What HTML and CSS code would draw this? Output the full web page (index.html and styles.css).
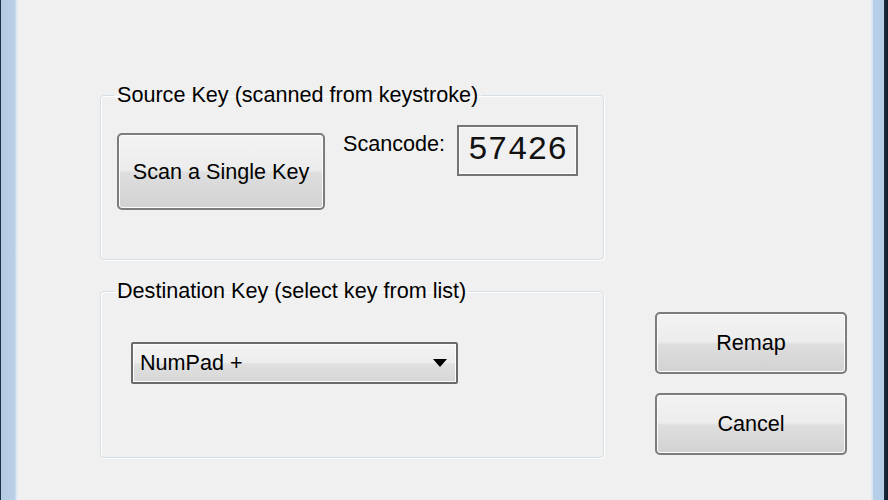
FILE: index.html
```html
<!DOCTYPE html>
<html lang="en">
<head>
    <meta charset="UTF-8">
    <meta name="viewport" content="width=device-width, initial-scale=1.0">
    <title>Remap Key</title>
    <link rel="stylesheet" href="styles.css">
</head>
<body>
    <div class="window">
        <div class="edge edge-left"></div>
        <div class="client">
            <div class="groups">
                <fieldset class="group group-source">
                    <legend>Source Key (scanned from keystroke)</legend>
                    <div class="group-body source-body">
                        <button class="btn btn-scan">Scan a Single Key</button>
                        <span class="scan-label">Scancode:</span>
                        <div class="scancode">57426</div>
                    </div>
                </fieldset>
                <fieldset class="group group-dest">
                    <legend>Destination Key (select key from list)</legend>
                    <div class="group-body dest-body">
                        <div class="combo">
                            <span class="combo-text">NumPad +</span>
                            <svg class="combo-arrow" width="14" height="8" viewBox="0 0 14 8">
                                <path d="M0 0 H14 L7 8 Z" fill="#000"/>
                            </svg>
                        </div>
                    </div>
                </fieldset>
            </div>
            <div class="actions">
                <button class="btn btn-action">Remap</button>
                <button class="btn btn-action">Cancel</button>
            </div>
        </div>
        <div class="edge edge-right"></div>
    </div>
</body>
</html>
```

FILE: styles.css
```css
* {
    box-sizing: border-box;
}
body {
    margin: 0;
    padding: 0;
    font-family: "Liberation Sans", Arial, sans-serif;
    font-size: 21.6px;
    color: #000;
    background-color: #f0f0f0;
}
.window {
    display: flex;
    width: 888px;
    height: 500px;
    overflow: hidden;
}
.edge {
    flex: none;
}
.edge-left {
    width: 18px;
    background: linear-gradient(to right, #1f2f45 0, #1f2f45 1px, #b4cbe4 1px, #bad0e8 15px, #dbe6f1 16px, #e9eef4 18px);
}
.edge-right {
    width: 17px;
    background: linear-gradient(to right, #e4ebf3 0, #d6e3f0 2px, #b6d0ea 2px, #b3cde8 13px, #1d2c40 13px, #111c2a 17px);
}
.client {
    flex: 1;
    display: flex;
    align-items: flex-start;
    padding-left: 82px;
    background-color: #f0f0f0;
}
.groups {
    display: flex;
    flex-direction: column;
    gap: 19px;
    padding-top: 83px;
}
.group {
    width: 504px;
    margin: 0;
    padding: 0;
    min-width: 0;
    border: 1px solid #d5dfe5;
    border-radius: 4px;
    box-shadow: inset 1px 1px 0 #fff, 1px 1px 0 #fff;
}
.group legend {
    margin-left: 13px;
    padding: 0 3px;
    line-height: 24px;
}
.group-body {
    display: flex;
    align-items: flex-start;
}
.source-body {
    height: 152px;
    padding: 18px 0 0 16px;
}
.dest-body {
    height: 154px;
    padding: 39px 0 0 30px;
}
.btn {
    font-family: inherit;
    font-size: inherit;
    color: #000;
    border: 2px solid #7c7c7c;
    border-radius: 5px;
    background: linear-gradient(to bottom, #f3f3f3 0%, #ececec 48%, #dedede 52%, #d2d2d2 100%);
    box-shadow: inset 0 0 0 1px #fbfbfb;
    padding: 0;
    cursor: pointer;
}
.btn-scan {
    width: 208px;
    height: 77px;
    margin-top: 8px;
}
.scan-label {
    margin-left: 18px;
    margin-top: 7px;
    line-height: 24px;
}
.scancode {
    width: 121px;
    height: 51px;
    margin-left: 12px;
    border: 2px solid #747474;
    box-shadow: inset 0 0 0 1px #fafafa;
    display: flex;
    align-items: center;
    justify-content: center;
    font-family: "Liberation Mono", "Courier New", monospace;
    font-size: 33px;
    color: #111;
}
.combo {
    width: 327px;
    height: 42px;
    border: 2px solid #6a6a6a;
    border-radius: 2px;
    background: linear-gradient(to bottom, #f4f4f4 0%, #ececec 50%, #e0e0e0 52%, #d6d6d6 100%);
    box-shadow: inset 0 0 0 1px #fcfcfc;
    display: flex;
    align-items: center;
    justify-content: space-between;
    padding: 0 9px 0 7px;
}
.combo-arrow {
    display: block;
}
.actions {
    display: flex;
    flex-direction: column;
    gap: 19px;
    margin-top: 312px;
    margin-left: 51px;
}
.btn-action {
    width: 192px;
    height: 62px;
}
```
